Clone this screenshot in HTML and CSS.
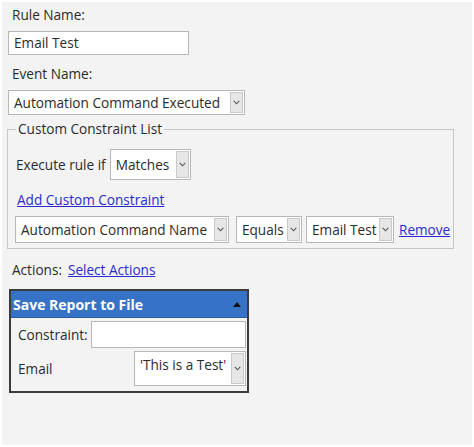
FILE: index.html
```html
<!DOCTYPE html>
<html>
<head>
<meta charset="utf-8">
<link rel="stylesheet" href="styles.css">
</head>
<body>
<div class="page">
  <div class="label">Rule Name:</div>
  <div class="textbox tb-rule">Email Test</div>
  <div class="label label-event">Event Name:</div>
  <div class="select sel-event"><span class="val">Automation Command Executed</span><span class="arrow"><svg width="7" height="5" viewBox="0 0 7 5"><path d="M0.7 0.8 L3.5 3.8 L6.3 0.8" fill="none" stroke="#555" stroke-width="1.1"/></svg></span></div>
  <fieldset class="constraints">
    <legend>Custom Constraint List</legend>
    <div class="exec-row">
      <span>Execute rule if</span>
      <div class="select sel-matches"><span class="val">Matches</span><span class="arrow"><svg width="7" height="5" viewBox="0 0 7 5"><path d="M0.7 0.8 L3.5 3.8 L6.3 0.8" fill="none" stroke="#555" stroke-width="1.1"/></svg></span></div>
    </div>
    <div class="add-line"><a class="link" href="#">Add Custom Constraint</a></div>
    <div class="cond-row">
      <div class="select sel-field"><span class="val">Automation Command Name</span><span class="arrow"><svg width="7" height="5" viewBox="0 0 7 5"><path d="M0.7 0.8 L3.5 3.8 L6.3 0.8" fill="none" stroke="#555" stroke-width="1.1"/></svg></span></div>
      <div class="select sel-op"><span class="val">Equals</span><span class="arrow"><svg width="7" height="5" viewBox="0 0 7 5"><path d="M0.7 0.8 L3.5 3.8 L6.3 0.8" fill="none" stroke="#555" stroke-width="1.1"/></svg></span></div>
      <div class="select sel-value"><span class="val">Email Test</span><span class="arrow"><svg width="7" height="5" viewBox="0 0 7 5"><path d="M0.7 0.8 L3.5 3.8 L6.3 0.8" fill="none" stroke="#555" stroke-width="1.1"/></svg></span></div>
      <a class="link remove" href="#">Remove</a>
    </div>
  </fieldset>
  <div class="actions-row"><span>Actions:</span><a class="link" href="#">Select Actions</a></div>
  <div class="panel">
    <div class="panel-head"><span>Save Report to File</span><span class="tri"></span></div>
    <div class="panel-body">
      <div class="prow"><span>Constraint:</span><div class="textbox tb-constraint"></div></div>
      <div class="prow prow-email"><span>Email</span><div class="select sel-email"><span class="val">'This is a Test'</span><span class="arrow"><svg width="7" height="5" viewBox="0 0 7 5"><path d="M0.7 0.8 L3.5 3.8 L6.3 0.8" fill="none" stroke="#555" stroke-width="1.1"/></svg></span></div></div>
    </div>
  </div>
</div>
</body>
</html>
```

FILE: styles.css
```css
* { box-sizing: border-box; }
html, body { margin: 0; padding: 0; background: #fff; }
body {
  font-family: "Open Sans", "Noto Sans", sans-serif;
  font-size: 13.6px;
  color: #2b2b2b;
}
.page {
  margin: 2px;
  height: 443px;
  background: #f3f3f3;
  padding: 3px 0 0 6px;
}
.label {
  line-height: 20px;
  margin-left: 4px;
}
.label-event { margin-top: 9px; }
.textbox {
  background: #fff;
  border: 1px solid #b7b7b7;
  height: 24px;
  line-height: 22px;
  padding: 0 5px;
}
.tb-rule { width: 181px; margin-top: 6px; }
.select {
  display: flex;
  align-items: stretch;
  background: #fff;
  border: 1px solid #b7b7b7;
  padding: 1px;
}
.select .val {
  flex: 1;
  padding-left: 4px;
  white-space: nowrap;
  overflow: hidden;
  display: flex;
  align-items: center;
}
.select .arrow {
  width: 13px;
  background: #e6e6e6;
  border: 1px solid #c9c9c9;
  display: flex;
  align-items: center;
  justify-content: center;
}
.sel-event { width: 237px; height: 25px; margin-top: 6px; }
.constraints {
  margin: 4px 0 0 -1px;
  width: 447px;
  min-width: 0;
  border: 1px solid #c6c6c6;
  padding: 10px 2px 5px 8px;
}
.constraints legend {
  padding: 0 2px;
  line-height: 20px;
}
.exec-row {
  display: flex;
  align-items: center;
}
.sel-matches { width: 81px; height: 31px; margin-left: 4px; }
.add-line {
  margin-top: 10px;
  line-height: 20px;
  padding-left: 1px;
}
.link { color: #2a2ad0; text-decoration: underline; }
.cond-row {
  display: flex;
  align-items: center;
  margin-top: 6px;
  margin-left: -1px;
}
.cond-row .select { height: 27px; flex: none; }
.sel-field { width: 214px; }
.sel-op { width: 66px; margin-left: 7px; }
.sel-value { width: 88px; margin-left: 4px; }
.remove { margin-left: 5px; white-space: nowrap; }
.actions-row {
  margin: 11px 0 0 4px;
  line-height: 20px;
  display: flex;
  gap: 6px;
}
.panel {
  margin: 9px 0 0 1px;
  width: 240px;
  border: 2px solid #3b3b3b;
}
.panel-head {
  background: #3672c5;
  color: #fff;
  font-weight: bold;
  font-size: 14px;
  height: 27px;
  display: flex;
  align-items: center;
  justify-content: space-between;
  padding: 0 6px 0 2px;
  border-bottom: 1px solid #2a5aa0;
}
.tri {
  width: 0; height: 0;
  border-left: 4px solid transparent;
  border-right: 4px solid transparent;
  border-bottom: 5px solid #111;
}
.panel-body {
  padding: 3px 1px 5px 7px;
}
.prow {
  display: flex;
  align-items: center;
  gap: 3px;
}
.tb-constraint { flex: 1; height: 27px; }
.prow-email {
  justify-content: space-between;
  margin-top: 3px;
}
.sel-email { width: 112px; height: 35px; }
.sel-email .val { align-items: flex-start; padding-top: 2px; line-height: 20px; }
```
